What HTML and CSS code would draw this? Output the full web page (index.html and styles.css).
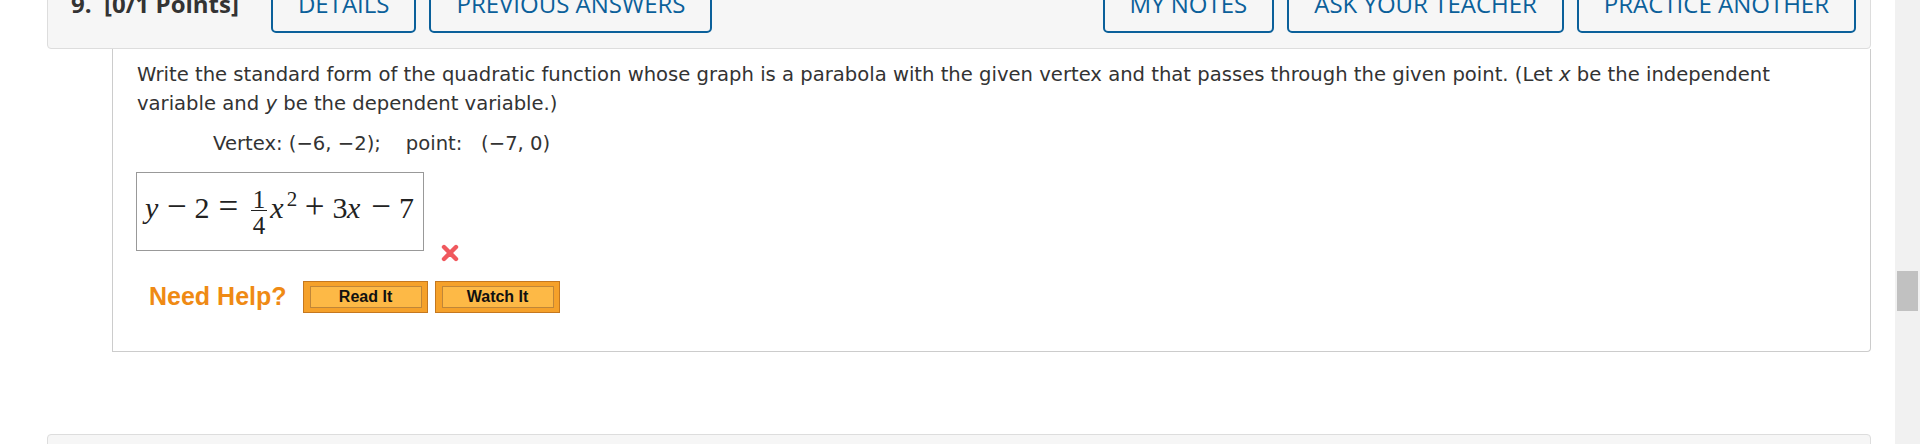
FILE: index.html
```html
<!DOCTYPE html>
<html lang="en">
<head>
<meta charset="utf-8">
<title>Question 9</title>
<link rel="stylesheet" href="styles.css">
</head>
<body>
<div class="page">
  <div class="main">
    <div class="qhead">
      <div class="qnum">9.&nbsp; [0/1 Points]</div>
      <button class="hbtn">DETAILS</button>
      <button class="hbtn">PREVIOUS ANSWERS</button>
      <button class="hbtn push">MY NOTES</button>
      <button class="hbtn">ASK YOUR TEACHER</button>
      <button class="hbtn">PRACTICE ANOTHER</button>
    </div>
    <div class="qbody">
      <p class="prompt">Write the standard form of the quadratic function whose graph is a parabola with the given vertex and that passes through the given point. (Let <i>x</i> be the independent variable and <i>y</i> be the dependent variable.)</p>
      <p class="given">Vertex: (−6, −2);&nbsp;&nbsp;&nbsp; point:&nbsp;&nbsp; (−7, 0)</p>
      <div class="answer-row">
        <div class="mathbox"><span class="mi y">y</span><span class="op">−</span><span class="mn">2</span><span class="op rel">=</span><span class="frac"><span class="num">1</span><span class="den">4</span></span><span class="mi x">x</span><span class="sup">2</span><span class="op">+</span><span class="mn">3</span><span class="mi x">x</span><span class="op">−</span><span class="mn">7</span></div>
        <svg class="wrong" width="20" height="20" viewBox="0 0 20 20" aria-label="incorrect">
          <path d="M4 4 L16 16 M16 4 L4 16" stroke="#f0595e" stroke-width="4.4" stroke-linecap="round"/>
        </svg>
      </div>
      <div class="help-row">
        <span class="need">Need Help?</span>
        <button class="obtn"><span>Read It</span></button>
        <button class="obtn"><span>Watch It</span></button>
      </div>
    </div>
    <div class="next"></div>
  </div>
  <div class="scrollbar"><div class="thumb"></div></div>
</div>
</body>
</html>
```

FILE: styles.css
```css
html, body {
  margin: 0;
  padding: 0;
  background: #fff;
  height: 444px;
  overflow: hidden;
}

.page {
  display: flex;
  height: 444px;
}

.main {
  flex: 1;
  padding-left: 47px;
  padding-right: 24px;
}

.qhead {
  margin-top: -34px;
  padding: 10px 14px 15px 23px;
  display: flex;
  align-items: baseline;
  gap: 13px;
  background: #f6f6f6;
  border: 1px solid #dddddd;
  border-radius: 0 0 4px 4px;
  font-family: "Open Sans", sans-serif;
}

.qnum {
  font-weight: 700;
  font-size: 24px;
  color: #333333;
  margin-right: 19px;
}

.hbtn {
  font-family: "Open Sans", sans-serif;
  font-size: 24px;
  line-height: 30px;
  color: #0b609a;
  background: #f6f6f6;
  border: 2px solid #0b609a;
  border-radius: 5px;
  padding: 10px 25px 12px;
}

.push {
  margin-left: auto;
}

.qbody {
  margin-left: 65px;
  border: 1px solid #cccccc;
  border-top: none;
  border-radius: 0 0 4px 0;
  padding: 11px 24px 38px 23px;
  font-family: "DejaVu Sans", Verdana, sans-serif;
  font-size: 19.6px;
  line-height: 29.25px;
  color: #333333;
}

.prompt {
  margin: 0;
  padding-left: 1px;
}

.given {
  margin: 10px 0 0;
  padding-left: 77px;
}

.answer-row {
  margin-top: 14px;
  display: flex;
  align-items: flex-end;
  gap: 16px;
}

.mathbox {
  border: 1px solid #999999;
  height: 77px;
  box-sizing: content-box;
  padding: 0 10px 0 8px;
  font-family: "Liberation Serif", "Times New Roman", serif;
  font-size: 30px;
  line-height: 70px;
  color: #222222;
  white-space: nowrap;
}

.mi {
  font-style: italic;
  display: inline-block;
}

.mi.y {
  width: 14.2px;
}

.mi.x {
  width: 16.6px;
}

.mn {
  display: inline-block;
  width: 14.5px;
}

.op {
  display: inline-block;
  width: 22.6px;
  text-align: center;
  font-size: 35px;
  line-height: 1;
  margin: 0 6.4px;
}

.op.rel {
  margin: 0 8px;
}

.frac {
  display: inline-flex;
  flex-direction: column;
  align-items: center;
  vertical-align: 10px;
  font-size: 25px;
  line-height: 20px;
  margin: 0 3px;
}

.num {
  border-bottom: 1px solid #222222;
  padding: 0 2px;
}

.den {
  padding-top: 5px;
}

.sup {
  display: inline-block;
  width: 10.3px;
  font-size: 21px;
  vertical-align: 12px;
  line-height: 1;
}

.wrong {
  margin-bottom: -12px;
  flex: none;
}

.help-row {
  margin-top: 30px;
  margin-left: 13px;
  display: flex;
  align-items: center;
  gap: 7px;
}

.need {
  font-family: "Liberation Sans", Arial, sans-serif;
  font-weight: 700;
  font-size: 25px;
  color: #ef8a14;
  margin-right: 9px;
}

.obtn {
  margin: 0;
  width: 125px;
  height: 32px;
  padding: 4px 5px 4px 6px;
  background: #f5a12a;
  border: 1px solid #c5781f;
  display: flex;
  box-sizing: border-box;
}

.obtn span {
  flex: 1;
  display: flex;
  align-items: center;
  justify-content: center;
  background: #fdb946;
  border: 1px solid #c08638;
  font-family: "Liberation Sans", Arial, sans-serif;
  font-weight: 700;
  font-size: 16px;
  color: #111111;
}

.next {
  margin-top: 82px;
  height: 40px;
  background: #f6f6f6;
  border: 1px solid #dddddd;
  border-radius: 4px 4px 0 0;
}

.scrollbar {
  width: 25px;
  flex: none;
  background: #f1f1f1;
}

.thumb {
  margin: 271px 2px 0;
  height: 40px;
  background: #c1c1c1;
}
```
